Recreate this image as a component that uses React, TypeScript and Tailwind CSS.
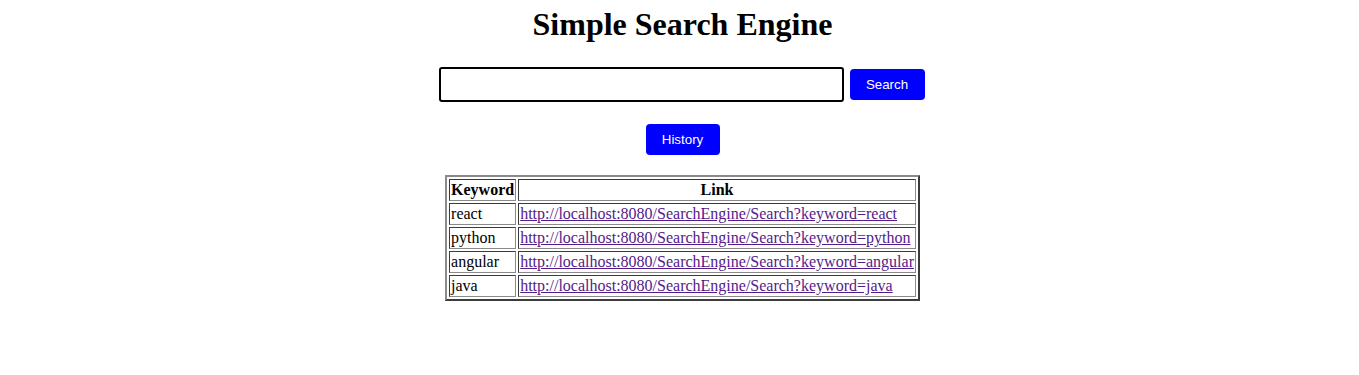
import React from "react";

const rows = ["react", "python", "angular", "java"];

export default function App() {
  return (
    <div className="flex min-h-[375px] w-full flex-col items-center bg-white pl-[6px] text-black" style={{ fontFamily: '"Liberation Serif", "Times New Roman", serif' }}>
      <h1 className="mt-[6px] text-[32px] font-bold leading-[37px]">Simple Search Engine</h1>
      <div className="mt-[24px] mr-[2px] flex items-center gap-[6px]">
        <input
          type="text"
          className="h-[35px] w-[405px] rounded-[3px] border-2 border-black bg-white px-[2px] outline-none"
        />
        <button className="h-[31px] w-[75px] rounded-[4px] bg-[#0000ff] text-[13.33px] font-medium text-white" style={{ fontFamily: '"Liberation Sans", Arial, sans-serif' }}>
          Search
        </button>
      </div>
      <button className="mt-[22px] h-[31px] w-[74px] rounded-[4px] bg-[#0000ff] text-[13.33px] font-medium text-white" style={{ fontFamily: '"Liberation Sans", Arial, sans-serif' }}>
        History
      </button>
      <table className="mt-[20px] border-separate border-spacing-[2px] border-2 border-t-[#8a8a8a] border-l-[#8a8a8a] border-r-[#3c3c3c] border-b-[#3c3c3c] text-[16px] leading-[18px]">
        <thead>
          <tr>
            <th className="border border-t-[#3c3c3c] border-l-[#3c3c3c] border-r-[#8a8a8a] border-b-[#8a8a8a] p-[1px] font-bold">Keyword</th>
            <th className="border border-t-[#3c3c3c] border-l-[#3c3c3c] border-r-[#8a8a8a] border-b-[#8a8a8a] p-[1px] font-bold">Link</th>
          </tr>
        </thead>
        <tbody>
          {rows.map((k) => (
            <tr key={k}>
              <td className="border border-t-[#3c3c3c] border-l-[#3c3c3c] border-r-[#8a8a8a] border-b-[#8a8a8a] p-[1px] text-left">{k}</td>
              <td className="border border-t-[#3c3c3c] border-l-[#3c3c3c] border-r-[#8a8a8a] border-b-[#8a8a8a] p-[1px] text-left">
                <a href="#" className="text-[#551a8b] underline">
                  {`http://localhost:8080/SearchEngine/Search?keyword=${k}`}
                </a>
              </td>
            </tr>
          ))}
        </tbody>
      </table>
    </div>
  );
}
